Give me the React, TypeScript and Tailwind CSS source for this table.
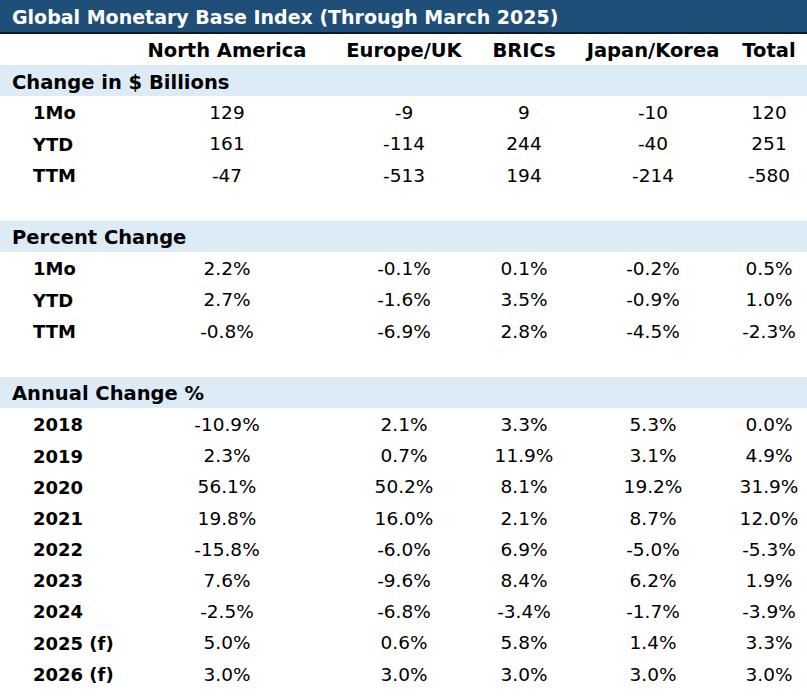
const cols = ["North America", "Europe/UK", "BRICs", "Japan/Korea", "Total"];

type Row = { label: string; values: string[] } | { section: string } | { blank: true };

const rows: Row[] = [
  { section: "Change in $ Billions" },
  { label: "1Mo", values: ["129", "-9", "9", "-10", "120"] },
  { label: "YTD", values: ["161", "-114", "244", "-40", "251"] },
  { label: "TTM", values: ["-47", "-513", "194", "-214", "-580"] },
  { blank: true },
  { section: "Percent Change" },
  { label: "1Mo", values: ["2.2%", "-0.1%", "0.1%", "-0.2%", "0.5%"] },
  { label: "YTD", values: ["2.7%", "-1.6%", "3.5%", "-0.9%", "1.0%"] },
  { label: "TTM", values: ["-0.8%", "-6.9%", "2.8%", "-4.5%", "-2.3%"] },
  { blank: true },
  { section: "Annual Change %" },
  { label: "2018", values: ["-10.9%", "2.1%", "3.3%", "5.3%", "0.0%"] },
  { label: "2019", values: ["2.3%", "0.7%", "11.9%", "3.1%", "4.9%"] },
  { label: "2020", values: ["56.1%", "50.2%", "8.1%", "19.2%", "31.9%"] },
  { label: "2021", values: ["19.8%", "16.0%", "2.1%", "8.7%", "12.0%"] },
  { label: "2022", values: ["-15.8%", "-6.0%", "6.9%", "-5.0%", "-5.3%"] },
  { label: "2023", values: ["7.6%", "-9.6%", "8.4%", "6.2%", "1.9%"] },
  { label: "2024", values: ["-2.5%", "-6.8%", "-3.4%", "-1.7%", "-3.9%"] },
  { label: "2025 (f)", values: ["5.0%", "0.6%", "5.8%", "1.4%", "3.3%"] },
  { label: "2026 (f)", values: ["3.0%", "3.0%", "3.0%", "3.0%", "3.0%"] },
];

const grid = "grid grid-cols-[140px_174px_180px_60px_198px_34px] h-[31.2px] items-center pt-[3px]";

export default function App() {
  return (
    <div className="w-[807px] h-[699px] bg-white text-black font-['DejaVu_Sans',sans-serif] text-[18.5px] leading-none">
      <div className="h-[34px] bg-[#1f4e78] border-b-2 border-[#111827] flex items-center pl-3 pt-[2px]">
        <span className="text-white font-bold text-[19px]">
          Global Monetary Base Index (Through March 2025)
        </span>
      </div>
      <div className={grid}>
        <div />
        {cols.map((c) => (
          <div key={c} className="flex justify-center font-bold whitespace-nowrap text-[19.5px]">
            {c}
          </div>
        ))}
      </div>
      {rows.map((r, i) => {
        if ("blank" in r) return <div key={i} className="h-[31.2px]" />;
        if ("section" in r)
          return (
            <div key={i} className="h-[31.2px] bg-[#ddebf7] flex items-center pl-3 pt-[3px] font-bold text-[19.5px]">
              {r.section}
            </div>
          );
        return (
          <div key={i} className={grid}>
            <div className="pl-[33px] font-bold whitespace-nowrap text-[18px]">{r.label}</div>
            {r.values.map((v, j) => (
              <div key={j} className="flex justify-center whitespace-nowrap">
                {v}
              </div>
            ))}
          </div>
        );
      })}
    </div>
  );
}
